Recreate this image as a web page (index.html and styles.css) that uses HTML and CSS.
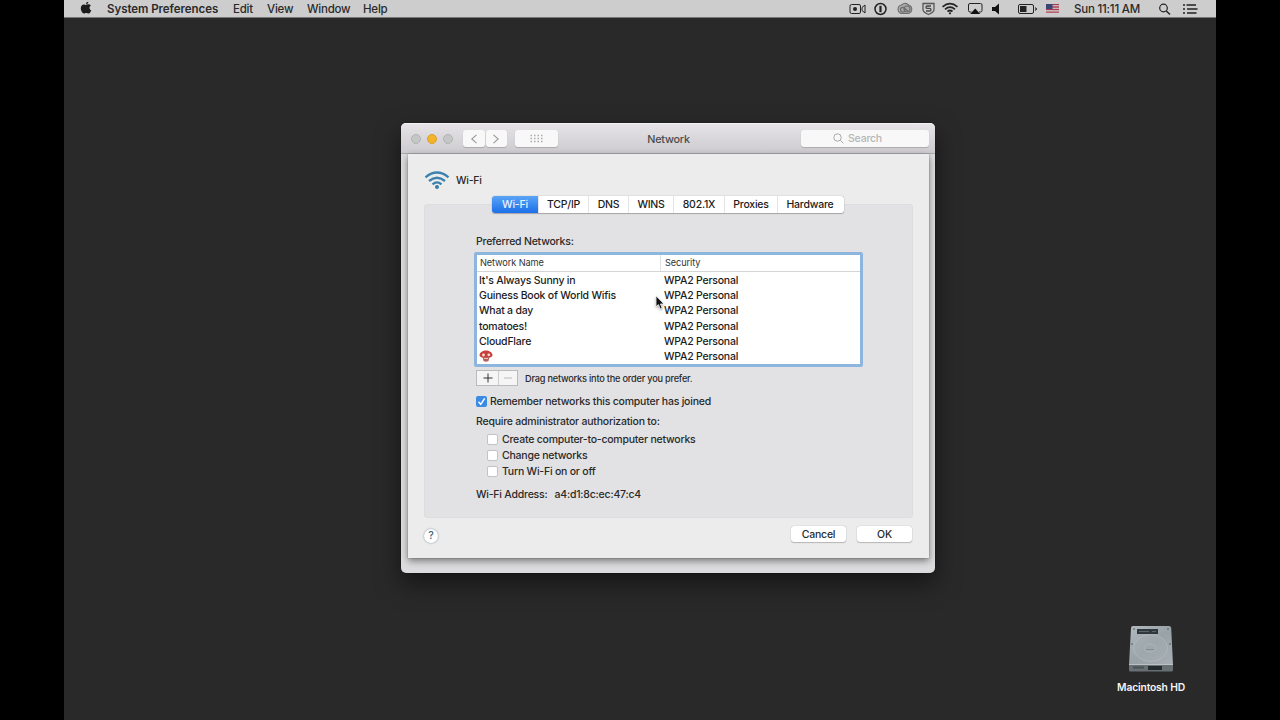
FILE: index.html
```html
<!DOCTYPE html>
<html lang="en">
<head>
<meta charset="utf-8">
<title>Network</title>
<link rel="stylesheet" href="styles.css">
</head>
<body>
<div class="desktop">
  <header class="menubar">
    <svg class="apple" width="12" height="14" viewBox="0 0 12 14"><path d="M8.3.7c.1 1.3-1 2.6-2.3 2.6C5.8 2 7 .8 8.300.7zM6 4c.6 0 1.300-.7 2.500-.7.9 0 1.800.4 2.400 1.200-2 1.200-1.700 4 .4 4.800-.5 1.400-1.500 3.200-2.700 3.200-.9 0-1.200-.5-2.300-.5s-1.500.5-2.300.5C2.500 12.500.8 9.700.8 7.300c0-2.500 1.500-3.900 3-3.900C4.800 3.400 5.500 4 6 4z"/></svg>
    <nav class="menus"><b class="m-app">System Preferences</b><span class="m-edit">Edit</span><span class="m-view">View</span><span class="m-window">Window</span><span class="m-help">Help</span></nav>
    <div class="status">
      <svg width="372" height="18" viewBox="844 0 372 18" fill="none" stroke="#222">
        <rect x="850" y="4.500" width="10.500" height="9" rx="1.500"/><circle cx="855" cy="9" r="2" fill="#222" stroke="none"/><path d="M862 7.500l3-2.500v8l-3-2.500z"/>
        <circle cx="880.500" cy="9" r="5.500" stroke-width="1.500"/><path d="M880.500 5.800v6.400" stroke-width="2.200"/>
        <g stroke="#6f6f6f" stroke-width="1.100"><path d="M902 13.500a4.300 4.300 0 0 1-.5-8.500q4-3.300 7.500.3a4.300 4.300 0 0 1-.5 8.200z" fill="#aaa"/><circle cx="902.800" cy="9.700" r="2.300"/><circle cx="907" cy="9" r="3"/><path d="M903.500 7.500l5 4"/></g>
        <path d="M923 3.500h11v6c0 2.500-3 4-5.500 5-2.500-1-5.500-2.500-5.500-5z" stroke="#555" stroke-width="1.300"/><path d="M931 6h-3.800q-1.200 0-1.200 1.200t1.200 1.200h2.400q1.400 0 1.400 1.300t-1.400 1.300H926" stroke="#444" stroke-width="1.300"/>
        <path d="M942.500 6.800q7.500-6.200 15 0M945 9.300q5-4.200 10 0M947.500 11.500q2.500-2 5 0" stroke-width="1.700"/><circle cx="950" cy="13.300" r="1.100" fill="#222" stroke="none"/>
        <path d="M971.500 12H970q-1.500 0-1.500-1.500V5q0-1.500 1.500-1.500h10.500Q982 3.500 982 5v5.500q0 1.500-1.500 1.500H979"/><path d="M975.200 8.500l5 5.500h-10z" fill="#111" stroke="none"/>
        <path d="M992 7h3l4-3.500v11L995 11h-3z" fill="#111" stroke="none"/>
        <rect x="1018.500" y="4.500" width="15" height="9" rx="1.500"/><path d="M1020 6h6.500v6h-6.500z" fill="#222" stroke="none"/><path d="M1035.500 7.500q2 1.500 0 3" fill="#222"/>
        <path d="M1046 4h13v9h-13z" fill="#ddd" stroke="none"/><path d="M1046 4.700h13M1046 7h13M1046 9.500h13M1046 12.200h13" stroke="#a53b4e" stroke-width="1.300"/><path d="M1046 4h6.500v5h-6.500z" fill="#394675" stroke="none"/>
        <circle cx="1163.500" cy="8" r="3.800" stroke-width="1.200"/><path d="M1166.300 11l3.700 3.500" stroke-width="1.400"/>
        <path d="M1183 5h2M1183 9h2M1183 13h2M1186.500 5h9.500M1187 9h10.500M1187 13h9.500" stroke-width="1.600"/>
      </svg>
      <span class="clock">Sun 11:11 AM</span>
    </div>
  </header>

  <main class="window">
    <div class="titlebar">
      <i class="light"></i><i class="light amber"></i><i class="light"></i>
      <div class="navs"><span><svg width="8" height="10" viewBox="0 0 8 10"><path d="M6.500.8L1.800 5l4.700 4.200"/></svg></span><span><svg width="8" height="10" viewBox="0 0 8 10"><path d="M1.500.8L6.200 5 1.500 9.200"/></svg></span></div>
      <div class="grid"><svg width="13" height="9" viewBox="0 0 13 9"><path d="M.5 1.500h12M.5 4.500h12M.5 7.500h12" stroke-width="1.500" stroke-dasharray="1.500 2"/></svg></div>
      <div class="title"><span>Network</span></div>
      <div class="search"><svg width="11" height="11" viewBox="0 0 11 11"><circle cx="4.500" cy="4.500" r="3.700"/><path d="M7.300 7.300l3 3"/></svg><span>Search</span></div>
    </div>
    <section class="sheet">
      <div class="heading"><svg width="26" height="20" viewBox="0 0 26 20"><g fill="none" stroke="#3b83ad" stroke-width="2.300"><path d="M1.500 7.300q11.500-9.600 23 0"/><path d="M5 11q8-6.600 16 0"/><path d="M8.500 14.300q4.500-3.800 9 0"/></g><circle cx="13" cy="17" r="2" fill="#347ba6"/></svg><span>Wi-Fi</span></div>
      <div class="pane">
        <div class="tabs"><span class="t1">Wi-Fi</span><span class="t2">TCP/IP</span><span class="t3">DNS</span><span class="t4">WINS</span><span class="t5">802.1X</span><span class="t6">Proxies</span><span class="t7">Hardware</span></div>
        <div class="label pref">Preferred Networks:</div>
        <div class="table">
          <div class="thead"><span>Network Name</span><span>Security</span></div>
          <div class="tr"><span>It's Always Sunny in</span><span>WPA2 Personal</span></div>
          <div class="tr"><span>Guiness Book of World Wifis</span><span>WPA2 Personal</span></div>
          <div class="tr"><span>What a day</span><span>WPA2 Personal</span></div>
          <div class="tr"><span>tomatoes!</span><span>WPA2 Personal</span></div>
          <div class="tr"><span>CloudFlare</span><span>WPA2 Personal</span></div>
          <div class="tr"><span><svg class="mushroom" width="14" height="12" viewBox="0 0 14 12"><path d="M.5 5C1 2 4 .5 7 .5S13 2 13.500 5c0 2-2.500 2.800-6.500 2.800S.5 7 .5 5z" fill="#c9403b"/><path d="M3.500 7h7l-1 4q-2.500 1.500-5 0z" fill="#b8605a"/><circle cx="4.500" cy="5" r="1.400" fill="#f2dfdc"/><circle cx="9.800" cy="4.800" r="1.400" fill="#f2dfdc"/><path d="M5 8.500h4" stroke="#eac3bb"/></svg></span><span>WPA2 Personal</span></div>
        </div>
        <div class="actions"><div class="pm"><span><svg width="10" height="10" viewBox="0 0 10 10"><path d="M5 .5v9M.5 5h9" stroke="#333"/></svg></span><span><svg width="10" height="10" viewBox="0 0 10 10"><path d="M1 5h8" stroke="#bbb"/></svg></span></div><span class="drag">Drag networks into the order you prefer.</span></div>
        <div class="check remember"><i class="box on"><svg width="11" height="11" viewBox="0 0 11 11"><path d="M2.500 5.800l2.200 2.500 4-6" fill="none" stroke="#fff" stroke-width="1.500"/></svg></i><span>Remember networks this computer has joined</span></div>
        <div class="label require">Require administrator authorization to:</div>
        <div class="check sub"><i class="box"></i><span>Create computer-to-computer networks</span></div>
        <div class="check sub"><i class="box"></i><span>Change networks</span></div>
        <div class="check sub"><i class="box"></i><span>Turn Wi-Fi on or off</span></div>
        <div class="label address"><span>Wi-Fi Address:</span><span class="mac">a4:d1:8c:ec:47:c4</span></div>
      </div>
      <div class="footer"><span class="help">?</span><span class="btn cancel">Cancel</span><span class="btn ok">OK</span></div>
    </section>
  </main>

  <div class="drive">
    <svg width="46" height="48" viewBox="0 0 46 48"><defs><linearGradient id="metal" x2="1" y2="1"><stop stop-color="#b2babe"/><stop offset=".5" stop-color="#98a2a7"/><stop offset="1" stop-color="#a8b0b4"/></linearGradient></defs><path d="M5 1h36q2 0 2.200 2L45 40H1L3 3q0-2 2-2z" fill="url(#metal)"/><path d="M1 39h44v6q0 1.500-1.500 1.500h-41Q1 46.500 1 45z" fill="#687074"/><path d="M9 4h21v5H9z" fill="#30383c"/><path d="M11 6.500h10M24 6.500h4" stroke="#59666b"/><ellipse cx="22.500" cy="23" rx="17" ry="13.500" fill="#a3adb2" fill-opacity=".5" stroke="#c2cace" stroke-opacity=".4"/><ellipse cx="22" cy="23" rx="6" ry="4" fill="none" stroke="#b4bcc0" stroke-opacity=".6"/><path d="M18 24.500h8" stroke="#828c91"/><path d="M1 39.500h44" stroke="#bbc2c5"/><path d="M20 41h14v4H20z" fill="#252c30"/><path d="M5 42.500h11" stroke="#465055" stroke-width="2"/><g fill="#4a5459"><circle cx="6" cy="4" r=".8"/><circle cx="40" cy="4" r=".8"/><circle cx="4" cy="19" r=".8"/><circle cx="42" cy="19" r=".8"/></g></svg>
    <span>Macintosh HD</span>
  </div>

  <svg class="cursor" width="10" height="15" viewBox="0 0 10 15"><path d="M1 .8v11l2.400-2.200 1.800 4.300 2-.9-1.800-4H9z" fill="#111" stroke="#fff" stroke-width=".8"/></svg>
</div>
</body>
</html>
```
FILE: styles.css
```css
* { box-sizing: border-box; }
body { margin: 0; background: #000; font-family: Inter, "Liberation Sans", sans-serif; font-size: 10.500px; font-weight: 500; letter-spacing: -.22px; color: #2a2a2a; }
svg { display: block; flex: none; }
span { white-space: nowrap; }
i { font-style: normal; }

.desktop { position: relative; width: 1152px; height: 720px; margin: 0 auto; overflow: hidden; background: #292929; }
.menubar { display: flex; height: 18px; line-height: 18px; background: #cdcdce; border-bottom: 1px solid #777; font-size: 11.500px; }
.menubar svg { height: 18px; }
.menubar .apple { height: 14px; margin: 1px 0 0 16px; fill: #1c1c1c; }
.menus { display: flex; margin-left: 15px; }
.m-app { width: 126px; font-weight: 600; letter-spacing: -.05px; }
.m-edit { width: 34px; }
.m-view { width: 40px; }
.m-window { width: 56px; }
.status { position: relative; margin-left: auto; }
.clock { position: absolute; left: 230px; top: 0; }

.window { position: absolute; left: 337px; top: 123px; width: 534px; height: 450px; border-radius: 5px; background: #dcdbdd; box-shadow: 0 10px 24px rgba(0,0,0,.5), 0 0 1px #000; }
.titlebar { display: flex; align-items: center; height: 31px; padding: 0 6px 0 10px; border-radius: 5px 5px 0 0; background: linear-gradient(#e5e3e6, #cdcbcf); border-bottom: 1px solid #aaa9ac; border-top: 1px solid #f4f4f4; }
.light { flex: none; width: 10px; height: 10px; margin-right: 6px; border-radius: 50%; background: #c5c6c6; border: 1px solid #b2b4b4; }
.amber { background: #f3b32b; border-color: #dda02a; }
.navs { display: flex; gap: 1px; margin-left: 4px; }
.navs span, .grid, .search { display: flex; align-items: center; justify-content: center; height: 17px; border-radius: 3px; background: #f8f8f8; box-shadow: 0 1px 1px #aaa; }
.navs span { width: 21.500px; }
.navs path { fill: none; stroke: #999; stroke-width: 1.100; }
.grid { width: 43px; margin-left: 8px; }
.grid path { stroke: #aaa; }
.title { flex: 1; display: flex; justify-content: center; padding-right: 22px; color: #4c4c4c; padding-top: 1px; font-size: 10.800px; }
.search { width: 128px; gap: 4px; color: #b5b5b5; padding: 0 15px 0 0; }
.search svg { fill: none; stroke: #aaa; }

.sheet { width: 521px; height: 404px; margin-left: 7px; padding: 15px 16px 0 16px; background: #ececec; box-shadow: 0 3px 7px rgba(0,0,0,.45), 0 0 1px #777; }
.heading { display: flex; align-items: center; gap: 6px; height: 20px; }
.heading svg { margin-top: 1px; }
.heading span { padding-top: 2px; }
.pane { height: 314px; margin-top: 15px; padding: 0 51px; border: 1px solid #dddde0; background: #e2e2e4; border-radius: 3px; }
.tabs { display: flex; width: 352px; height: 17px; margin: -9px 0 0 16px; line-height: 17px; border-radius: 3px; background: #fff; box-shadow: 0 0 1px #888, 0 1px 1px #aaa; text-align: center; color: #1c1c1c; }
.tabs span { border-left: 1px solid #e4e4e4; }
.tabs .t1 { width: 46px; color: #e8f2ff; background: linear-gradient(#5ba4f5, #1b6fe9); border: 0; border-radius: 3px 0 0 3px; }
.t2 { width: 50px; } .t3 { width: 40px; } .t4 { width: 45px; } .t5 { width: 51px; } .t6 { width: 53px; } .t7 { flex: 1; padding-right: 2px; }
.label { height: 14px; line-height: 14px; }
.pref { margin-top: 21px; padding-top: 1px; }
.table { width: 389px; height: 115px; margin: 4px 0 0 -2px; border: 3px solid #8db5de; border-radius: 2px; background: #fff; }
.thead { display: flex; height: 17px; line-height: 15px; border-bottom: 1px solid #d4d4d4; font-size: 9.200px; font-weight: 400; letter-spacing: -.1px; color: #333; margin-bottom: 1px; }
.thead span:first-child { width: 184px; padding-left: 3px; border-right: 1px solid #e2e2e2; }
.thead span:last-child { padding-left: 4px; }
.tr { display: flex; align-items: center; height: 15.200px; line-height: 15px; color: #1c1c1c; }
.tr span:first-child { width: 187px; padding-left: 2px; }
.mushroom { margin-top: -1px; }
.actions { display: flex; align-items: center; height: 16px; margin-top: 3px; font-size: 9.200px; letter-spacing: -.21px; }
.pm { display: flex; width: 42px; height: 16px; border: 1px solid #bbb; background: #f5f5f5; }
.pm span { display: flex; flex: 1; align-items: center; justify-content: center; }
.pm span + span { border-left: 1px solid #ccc; flex: 0 0 19px; }
.drag { margin-left: 7px; }
.check { display: flex; align-items: center; height: 16px; line-height: 14px; gap: 4px; }
.check span { padding-top: 2px; }
.box { width: 11px; height: 11px; border: 1px solid #c3c3c3; border-radius: 2px; background: #fff; }
.box.on { border: 0; background: #3b8be4; }
.remember { margin-top: 7px; gap: 3px; }
.require { margin-top: 5px; padding-top: 1px; margin-bottom: 3px; }
.sub { margin-left: 11px; }
.address { display: flex; margin-top: 8px; padding-top: 1px; }
.mac { margin-left: 7px; letter-spacing: -.2px; }
.footer { display: flex; align-items: center; height: 32px; }
.help { width: 14px; height: 14px; line-height: 14px; margin-top: 3px; border-radius: 50%; background: #fff; box-shadow: 0 0 2px #789; color: #386575; text-align: center; }
.btn { width: 55px; height: 16px; line-height: 17px; border-radius: 3px; background: #fff; box-shadow: 0 0 1px #999, 0 1px 1px #bbb; text-align: center; }
.cancel { margin-left: auto; }
.ok { margin-left: 11px; margin-right: 1px; }

.drive { position: absolute; left: 1042px; top: 625px; width: 90px; display: flex; flex-direction: column; align-items: center; gap: 8px; color: #f4f4f4; font-size: 10.300px; font-weight: 600; letter-spacing: -.17px; line-height: 13px; }
.cursor { position: absolute; left: 591px; top: 295px; filter: drop-shadow(0 1px 1px rgba(0,0,0,.35)); }
```
